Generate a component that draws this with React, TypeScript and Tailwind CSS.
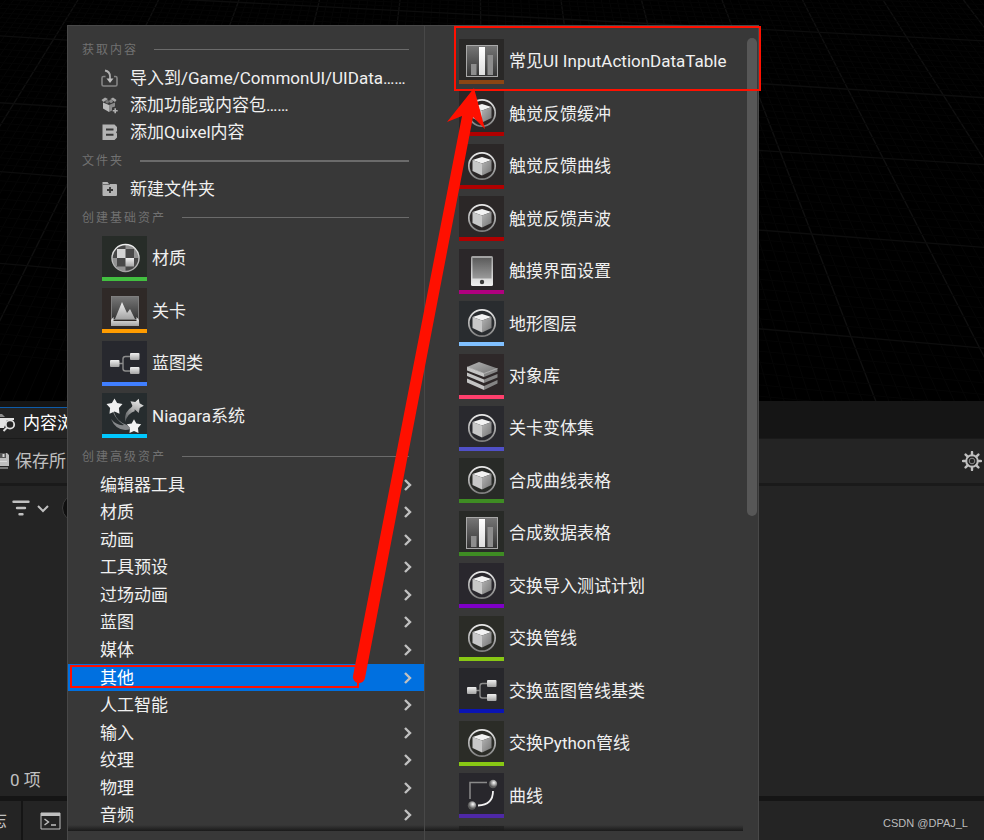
import type { ReactNode } from 'react'

type TileKind = 'material' | 'level' | 'blueprint' | 'niagara' | 'bars' | 'cube' | 'device' | 'stack' | 'curve'

interface AssetEntry {
  label: string
  icon: TileKind
  tile: string
}

const basicAssets: AssetEntry[] = [
  { label: '材质', icon: 'material', tile: 'bg-[#272c28] border-[#42bf40]' },
  { label: '关卡', icon: 'level', tile: 'bg-[#2f2927] border-[#ff9c00]' },
  { label: '蓝图类', icon: 'blueprint', tile: 'bg-[#27282e] border-[#407fff]' },
  { label: 'Niagara系统', icon: 'niagara', tile: 'bg-[#262c2e] border-[#00c8ff]' },
]

const otherAssets: AssetEntry[] = [
  { label: '常见UI InputActionDataTable', icon: 'bars', tile: 'bg-[#292827] border-[#8b4513]' },
  { label: '触觉反馈缓冲', icon: 'cube', tile: 'bg-[#2b2727] border-[#b00000]' },
  { label: '触觉反馈曲线', icon: 'cube', tile: 'bg-[#2b2727] border-[#b00000]' },
  { label: '触觉反馈声波', icon: 'cube', tile: 'bg-[#2b2727] border-[#b00000]' },
  { label: '触摸界面设置', icon: 'device', tile: 'bg-[#2b2729] border-[#b0007f]' },
  { label: '地形图层', icon: 'cube', tile: 'bg-[#292c2f] border-[#80c0ff]' },
  { label: '对象库', icon: 'stack', tile: 'bg-[#2e2829] border-[#ff3f6c]' },
  { label: '关卡变体集', icon: 'cube', tile: 'bg-[#29292e] border-[#5050c8]' },
  { label: '合成曲线表格', icon: 'cube', tile: 'bg-[#282a27] border-[#3e8c23]' },
  { label: '合成数据表格', icon: 'bars', tile: 'bg-[#282a27] border-[#3e8c23]' },
  { label: '交换导入测试计划', icon: 'cube', tile: 'bg-[#29272d] border-[#7f00c8]' },
  { label: '交换管线', icon: 'cube', tile: 'bg-[#2b2c27] border-[#88c814]' },
  { label: '交换蓝图管线基类', icon: 'blueprint', tile: 'bg-[#27272b] border-[#0a14b4]' },
  { label: '交换Python管线', icon: 'cube', tile: 'bg-[#2b2c27] border-[#88c814]' },
  { label: '曲线', icon: 'curve', tile: 'bg-[#28272c] border-[#4e28a6]' },
]

const categories = [
  '编辑器工具', '材质', '动画', '工具预设', '过场动画', '蓝图', '媒体',
  '其他', '人工智能', '输入', '纹理', '物理', '音频',
]

const STAR = 'M0 -8 L2.600 -3.400 L8 -2.400 L4.400 1.600 L5 7.200 L0 5 L-5 7.200 L-4.400 1.600 L-8 -2.400 L-2.600 -3.400 Z'

const tileArt: Record<TileKind, ReactNode> = {
  material: (
    <>
      <clipPath id="ball"><circle cx="23.500" cy="22" r="13" /></clipPath>
      <g clipPath="url(#ball)">
        <rect x="9" y="8" width="29" height="29" fill="#484848" />
        <path d="M9 22h6v8.500H9z M23.500 8H32v5h-8.500z M32 13h6v9h-6z M15 30.500h8.500V37H15z" fill="#929292" />
        <path d="M15 13h8.500v9H15z" fill="#d4d4d4" />
        <path d="M23.500 22H32v8.500h-8.500z" fill="url(#silver)" />
      </g>
      <circle cx="23.500" cy="22" r="13.500" fill="none" stroke="url(#silver)" strokeWidth="1.400" />
    </>
  ),
  level: (
    <>
      <rect x="9.500" y="8.500" width="27" height="23" fill="url(#slate)" stroke="#8a8a8a" strokeWidth="0.800" />
      <path d="M13 31 L20 14 L25 25 L28 21 L33 31 Z" fill="url(#silver)" />
      <path d="M9 38V32l2.500-3v4h23v-4L37 32v6z" fill="url(#silver)" />
    </>
  ),
  blueprint: (
    <>
      <path d="M17 22.500h4 M28 15.500h-4.500q-2.500 0-2.500 2.500v9.500q0 2.500 2.500 2.500H28" fill="none" stroke="#8c8c8c" strokeWidth="1.400" />
      <rect x="8" y="19" width="9.500" height="7" rx="1" fill="url(#silver)" />
      <rect x="28" y="12" width="9.500" height="7" rx="1" fill="url(#silver)" />
      <rect x="28" y="26" width="9.500" height="7" rx="1" fill="url(#silver)" />
    </>
  ),
  niagara: (
    <>
      <path d="M12 19 Q15 29 25 32 L29 36 Q15 40 9 26 Q15 33 22 32 Q14 27 11 19 Z" fill="#85888a" />
      <path d="M23 29 Q22 18 30 14 L33 18 Q26 20 23 29 Z" fill="url(#trail)" />
      <path d={STAR} transform="translate(12.500 13.500)" fill="#f0f0f0" />
      <path d={STAR} transform="translate(34.500 12.500) rotate(18) scale(0.880)" fill="url(#silver)" />
      <path d={STAR} transform="translate(32 33.500) scale(0.900)" fill="#f2f2f2" />
    </>
  ),
  bars: (
    <>
      <rect x="7.500" y="6.500" width="31" height="31" fill="url(#slate)" stroke="#a8a8a8" />
      <rect x="12" y="25" width="5.500" height="11" fill="#8d8d8d" />
      <rect x="20" y="8" width="6" height="28" fill="url(#whiteFade)" />
      <rect x="28.500" y="16" width="5.500" height="20" fill="#8d8d8d" />
    </>
  ),
  cube: (
    <>
      <circle cx="23" cy="22" r="13.200" fill="none" stroke="url(#ring)" strokeWidth="1.700" />
      <path d="M13.500 16 L23 13 L32.500 16 L23 19.500 Z" fill="#f2f2f2" />
      <path d="M13.500 16 L23 19.500 V31.500 L13.500 27 Z" fill="#c8c8c8" />
      <path d="M32.500 16 L23 19.500 V31.500 L32.500 27 Z" fill="url(#side)" />
    </>
  ),
  device: (
    <>
      <rect x="12" y="7" width="22" height="30" rx="1.500" fill="url(#deviceBody)" />
      <rect x="13.500" y="9" width="19" height="20.500" fill="url(#screen)" />
      <circle cx="23" cy="33" r="2.200" fill="#3a3a3a" />
    </>
  ),
  stack: (
    <>
      <path d="M8 13 L25 19.500 V23 L8 16.500 Z M8 18.500 L25 25.500 V29 L8 22 Z M8 24.500 L25 32 V36 L8 28.500 Z" fill="#c4c4c4" />
      <path d="M25 19.500 L38.500 14.500 V17.500 L25 23 Z M25 25.500 L38.500 20 V23.500 L25 29 Z M25 32 L38.500 26 V29.500 L25 36 Z" fill="#858585" />
      <path d="M8 13 L20 8 L38.500 14.500 L25 19.500 Z" fill="url(#side)" />
      <path d="M8 13 L25 19.500 L38.500 14.500" fill="none" stroke="#dcdcdc" strokeWidth="0.600" />
    </>
  ),
  curve: (
    <>
      <path d="M11 26 V9.500 H28" fill="none" stroke="#8a8a8a" strokeWidth="1.500" />
      <path d="M34 18 Q34 32 19 32.500" fill="none" stroke="#f2f2f2" strokeWidth="1.800" />
      <circle cx="34" cy="11" r="4.200" fill="url(#knob)" />
      <circle cx="13" cy="32.500" r="4.200" fill="url(#knob)" />
    </>
  ),
}

// Gradients shared by all the tiles
function SharedDefs() {
  return (
    <svg className="absolute size-0" aria-hidden="true">
      <defs>
        <linearGradient id="silver" x2="0" y2="1"><stop stopColor="#f0f0f0" /><stop offset="1" stopColor="#a4a4a4" /></linearGradient>
        <linearGradient id="ring" x2="0" y2="1"><stop stopColor="#e8e8e8" /><stop offset="1" stopColor="#808080" /></linearGradient>
        <linearGradient id="slate" x2="0" y2="1"><stop stopColor="#777777" /><stop offset="1" stopColor="#343434" /></linearGradient>
        <linearGradient id="whiteFade" x2="0" y2="1"><stop stopColor="#ffffff" /><stop offset="1" stopColor="#dedede" /></linearGradient>
        <linearGradient id="side" x1="0" x2="1" y2="1"><stop stopColor="#b4b4b4" /><stop offset="1" stopColor="#747474" /></linearGradient>
        <linearGradient id="deviceBody" x2="0" y2="1"><stop stopColor="#a0a0a0" /><stop offset="1" stopColor="#f0f0f0" /></linearGradient>
        <linearGradient id="screen" x2="0" y2="1"><stop stopColor="#5c5c5c" /><stop offset="1" stopColor="#9a9a9a" /></linearGradient>
        <linearGradient id="trail" x1="1" x2="0" y2="1"><stop stopColor="#c0c0c0" /><stop offset="1" stopColor="#4c5052" /></linearGradient>
        <radialGradient id="knob" cx="0.600" cy="0.350"><stop stopColor="#ffffff" /><stop offset="1" stopColor="#5a5a5a" /></radialGradient>
      </defs>
    </svg>
  )
}

function AssetRow({ entry, className }: { entry: AssetEntry; className: string }) {
  return (
    <button className={`flex items-center gap-[5px] text-left ${className}`}>
      <span className={`block h-[45px] w-[45px] shrink-0 border-b-4 ${entry.tile}`}>
        <svg width="45" height="41" viewBox="0 0 45 41" aria-hidden="true">{tileArt[entry.icon]}</svg>
      </span>
      <span className="whitespace-nowrap">{entry.label}</span>
    </button>
  )
}

function SectionHeader({ title, line = 'h-px' }: { title: string; line?: string }) {
  return (
    <div className="flex h-[29px] items-center gap-4 pr-[15px] pl-[14px]">
      <h2 className="text-xs tracking-[2px] text-[#717171]">{title}</h2>
      <span className={`flex-1 bg-[#6b6b6b] ${line}`} />
    </div>
  )
}

function ActionRow({ label, children }: { label: string; children: ReactNode }) {
  return (
    <button className="flex items-center gap-3 pl-[33px] text-left whitespace-nowrap">
      <svg width="17" height="18" viewBox="0 0 17 18" className="shrink-0" aria-hidden="true">{children}</svg>
      <span>{label}</span>
    </button>
  )
}

function ViewportGrid() {
  const rays: ReactNode[] = []
  for (let i = -50; i < 170; i++) {
    const x = 78 + i * 8.05
    const major = i % 10 === 0
    rays.push(
      <line key={`r${i}`} x1={x} y1="0" x2={476 + (x - 476) * 1.625} y2="402" stroke={major ? '#101010' : '#060606'} strokeWidth={major ? 1.3 : 1} />
    )
  }
  const stops = [[-45, -11], [-10, 41], [36, 98], [103, 165], [172, 248], [264, 349], [365, 465]]
  const rows: ReactNode[] = []
  stops.slice(0, -1).forEach(([l, r], i) => {
    const [nl, nr] = stops[i + 1]
    for (let k = 0; k < 10; k++) {
      rows.push(
        <line key={`h${i}-${k}`} x1="0" y1={l + ((nl - l) * k) / 10} x2="984" y2={r + ((nr - r) * k) / 10} stroke={k === 0 ? '#0d0d0d' : '#050505'} strokeWidth={k === 0 ? 1.4 : 1} />
      )
    }
  })
  return (
    <svg className="h-full w-full" viewBox="0 0 984 402" preserveAspectRatio="none" aria-hidden="true">
      {rays}
      {rows}
    </svg>
  )
}

function Gear() {
  return (
    <svg width="20" height="20" viewBox="0 0 20 20" fill="none" stroke="#c0c0c0" aria-hidden="true">
      <circle cx="10" cy="10" r="5.800" strokeWidth="2" />
      <circle cx="10" cy="10" r="2.800" strokeWidth="1" stroke="#8a8a8a" />
      <path d="M10 1v3 M10 16v3 M1 10h3 M16 10h3 M3.600 3.600l2.100 2.100 M14.300 14.300l2.100 2.100 M3.600 16.400l2.100-2.100 M14.300 5.700l2.100-2.100" strokeWidth="2.400" strokeLinecap="round" />
    </svg>
  )
}

function Editor() {
  return (
    <div className="flex h-screen flex-col bg-[#242424] text-[#c0c0c0]">
      <div className="h-[401px] shrink-0 bg-black">
        <ViewportGrid />
      </div>
      <div className="flex h-[38px] shrink-0 items-end border-b border-[#1a1a1a] bg-[#151515]">
        <div className="flex h-[31px] w-40 items-center gap-[7px] border-t border-[#0d5cab] bg-[#242424] text-white">
          <svg width="16" height="20" viewBox="0 0 16 20" aria-hidden="true">
            <path d="M0 1h2l3 3h-5z" fill="#8c8c8c" />
            <path d="M0 5h14v2H7L4 15H0z" fill="#e4e4e4" />
            <circle cx="10" cy="11.500" r="4.200" fill="#242424" stroke="#e0e0e0" strokeWidth="1.800" />
            <path d="M7 14.500l-3.500 3.500" stroke="#e0e0e0" strokeWidth="2" />
          </svg>
          <span className="whitespace-nowrap">内容浏</span>
        </div>
      </div>
      <div className="flex h-[47px] shrink-0 items-center justify-between border-b-[3px] border-[#1a1a1a] pr-0.5">
        <button className="flex items-center gap-[5px]">
          <svg width="10" height="20" viewBox="0 0 10 20" aria-hidden="true">
            <path d="M0 2h7l2 2v11H0z" fill="#bdbdbd" />
            <path d="M0 2h6v5H0z" fill="#555555" />
            <path d="M2.500 3h2v3h-2z M0 10h7v1H0z" fill="#d8d8d8" />
            <path d="M0 16h8v2H0z" fill="#777777" />
          </svg>
          保存所
        </button>
        <button aria-label="设置"><Gear /></button>
      </div>
      <div className="flex min-h-0 flex-1 flex-col justify-between">
        <div className="flex h-[44px] items-center pl-3">
          <button aria-label="筛选" className="flex items-center gap-1.5">
            <svg width="18" height="16" viewBox="0 0 18 16" stroke="#c0c0c0" strokeWidth="2.400" strokeLinecap="round" aria-hidden="true">
              <path d="M1.500 1.700h15 M5 8h8 M7.500 14.300h3" />
            </svg>
            <svg width="14" height="16" viewBox="0 0 14 16" fill="none" stroke="#c0c0c0" strokeWidth="2" aria-hidden="true">
              <path d="M2 6l5 5 5-5" />
            </svg>
          </button>
          <input aria-label="搜索" className="ml-3 h-7 w-64 rounded-full border border-[#3c3c3c] bg-[#0f0f0f]" />
        </div>
        <p className="pb-1 pl-2.5 leading-6">0 项</p>
      </div>
      <div className="flex h-[44px] shrink-0 border-t-[5px] border-[#151515]">
        <div className="flex w-[23px] items-center justify-end overflow-hidden border-r-2 border-[#151515] pr-3.5">志</div>
        <button aria-label="控制台" className="ml-[17px]">
          <svg width="21" height="18" viewBox="0 0 21 18" fill="none" stroke="#c0c0c0" aria-hidden="true">
            <path d="M1 1h19v16H1z" />
            <path d="M1 2.500h19" strokeWidth="3" />
            <path d="M4.500 7l4 3-4 3 M11 13h5" strokeWidth="1.400" />
          </svg>
        </button>
        <p className="ml-auto self-center pt-1 pr-4 font-['Liberation_Sans'] text-[11px] text-[#bcbcbc]">CSDN @DPAJ_L</p>
      </div>
    </div>
  )
}

function CreateMenu() {
  return (
    <div className="flex min-w-0 flex-1 flex-col border-r border-[#484848]">
      <div className="flex flex-col pt-[9px]">
        <SectionHeader title="获取内容" />
        <div className="grid h-[82px] auto-rows-fr">
          <ActionRow label="导入到/Game/CommonUI/UIData……">
            <path d="M4.500 7.500H2.500Q1 7.500 1 9v6.500q0 1.500 1.500 1.500h12q1.500 0 1.500-1.500V9q0-1.500-1.500-1.500H13" fill="none" stroke="#858585" strokeWidth="1.600" />
            <path d="M4 1.500q5 1 5 6v3" fill="none" stroke="#b0b0b0" strokeWidth="1.800" />
            <path d="M5.500 9.500h7L9 14z" fill="#c0c0c0" />
          </ActionRow>
          <ActionRow label="添加功能或内容包……">
            <path d="M2 6.500l6 2.500v7l-6-3.500z" fill="#bcbcbc" />
            <path d="M14 6.500L8 9v7l3-1.500v-3l3-1z" fill="#8a8a8a" />
            <path d="M0.500 4L4 1.500l3 1.500L2.500 6z M15.500 4L12 1.500 9.500 3 14 6z" fill="#a8a8a8" />
            <circle cx="6.200" cy="5.800" r="1.800" fill="#777777" />
            <circle cx="10" cy="5.200" r="1.800" fill="#8a8a8a" />
            <path d="M14.200 12.200v5 M11.700 14.700h5" stroke="#b0b0b0" strokeWidth="1.600" />
          </ActionRow>
          <ActionRow label="添加Quixel内容">
            <path d="M1.500 1.500H13.500L16 4v4l-1 1.200 1 1.200v4.100L13.500 17H1.500z" fill="#b4b4b4" />
            <path d="M5 6.500h7.500 M5 11.800h7.500" stroke="#383838" strokeWidth="1.900" />
          </ActionRow>
        </div>
        <SectionHeader title="文件夹" line="h-0.5" />
        <div className="grid h-7">
          <ActionRow label="新建文件夹">
            <path d="M1.500 2h5l1.500 2h7q1 0 1 1v10q0 1-1 1H2.500q-1 0-1-1z" fill="#b4b4b4" />
            <path d="M1.500 4.500H9" stroke="#6c6c6c" />
            <path d="M9 7v6 M6 10h6" stroke="#383838" strokeWidth="1.800" />
          </ActionRow>
        </div>
        <SectionHeader title="创建基础资产" />
        <div className="grid h-[210px] auto-rows-fr">
          {basicAssets.map(entry => (
            <AssetRow key={entry.label} entry={entry} className="pl-[34px]" />
          ))}
        </div>
        <SectionHeader title="创建高级资产" />
        <div className="grid h-[358px] auto-rows-fr">
          {categories.map(name => (
            <button
              key={name}
              className={`flex items-center justify-between pr-[11px] pl-8 text-left ${name === '其他' ? 'bg-[#0070e0] text-white' : ''}`}
            >
              <span>{name}</span>
              <svg width="10" height="14" viewBox="0 0 10 14" fill="none" stroke="#c0c0c0" strokeWidth="2.400" aria-hidden="true">
                <path d="M2 2l5 5-5 5" />
              </svg>
            </button>
          ))}
        </div>
      </div>
      <div className="-mt-1 h-[6px] shrink-0 bg-linear-to-b from-transparent to-[#1a1a1a]" />
    </div>
  )
}

function OtherSubmenu() {
  return (
    <div className="flex w-[333px] flex-col">
      <div className="flex h-[805px] justify-between overflow-hidden">
        <div className="relative h-full flex-1 overflow-hidden pt-[9px]">
          <div className="grid h-[787px] auto-rows-fr">
            {otherAssets.map(entry => (
              <AssetRow key={entry.label} entry={entry} className="pl-[34px]" />
            ))}
          </div>
          <div className="mt-1 ml-[34px] h-[45px] w-[45px] bg-[#272727]" />
          <div className="absolute inset-x-0 bottom-0 h-[6px] bg-linear-to-b from-transparent to-[#1a1a1a]" />
        </div>
        <div className="w-[15px] pt-3 pl-1">
          <div className="h-[478px] w-2.5 rounded-full bg-[#575757]" />
        </div>
      </div>
    </div>
  )
}

// Red boxes and the arrow that join the category with its entry
function Annotations() {
  return (
    <svg className="pointer-events-none absolute top-0 left-0" width="800" height="720" viewBox="0 0 800 720" aria-hidden="true">
      <g fill="none" stroke="#ff1000" strokeWidth="2">
        <rect x="455" y="27" width="305" height="63" />
        <rect x="71" y="666" width="287" height="21" />
      </g>
      <path d="M474 88 L485 129 L473 117 L365 678 A6 6 0 0 1 353 676 L462 116 L447 122 Z" fill="#ff1000" />
    </svg>
  )
}

export default function App() {
  return (
    <main className="relative h-screen overflow-hidden font-[Roboto,'Noto_Sans_CJK_SC',sans-serif] text-[17px] leading-6">
      <SharedDefs />
      <Editor />
      <div className="absolute top-[25px] bottom-0 left-[67px] flex w-[692px] overflow-hidden border-x border-t border-[#484848] bg-[#383838] text-[#f0f0f0]">
        <CreateMenu />
        <OtherSubmenu />
      </div>
      <Annotations />
    </main>
  )
}
